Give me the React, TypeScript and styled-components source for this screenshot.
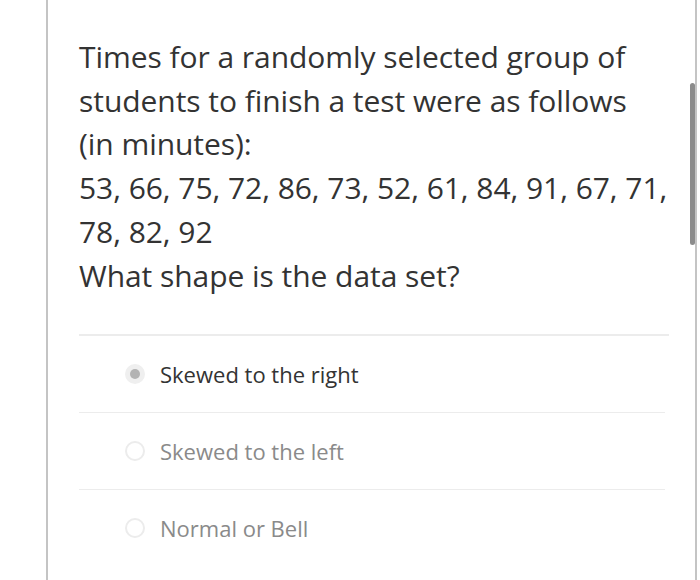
import React from 'react';
import styled, { createGlobalStyle } from 'styled-components';

const GlobalStyle = createGlobalStyle`
  html, body {
    margin: 0;
    padding: 0;
    background: #fff;
  }
  body {
    font-family: 'Open Sans', 'Noto Sans', sans-serif;
  }
`;

const options = [
  { label: 'Skewed to the right', selected: true },
  { label: 'Skewed to the left', selected: false },
  { label: 'Normal or Bell', selected: false }
];

export default () => {
  return (
    <>
      <GlobalStyle />
      <Page>
        <Card>
          <Question>
            Times for a randomly selected group of students to finish a test were as follows{' '}
            {'(in\u00a0minutes):'}
            <br />
            53, 66, 75, 72, 86, 73, 52, 61, 84, 91, 67, 71, 78, 82, 92
            <br />
            What shape is the data set?
          </Question>
          <Options>
            {options.map(o => (
              <Option key={o.label}>
                <Radio selected={o.selected} />
                <OptionLabel selected={o.selected}>{o.label}</OptionLabel>
              </Option>
            ))}
          </Options>
        </Card>
        <Scrollbar />
      </Page>
    </>
  );
};

const Page = styled.div`
  position: relative;
  width: 700px;
  height: 580px;
  overflow: hidden;
  background: #fff;
`;

const Card = styled.div`
  margin-left: 46px;
  width: 651px;
  height: 580px;
  box-sizing: border-box;
  border-left: 2px solid #c4c4c4;
  border-right: 2px solid #c4c4c4;
  padding: 35px 30px 0 31px;
`;

const Question = styled.p`
  margin: 0;
  width: 590px;
  font-size: 30px;
  line-height: 43.7px;
  color: #333;
  letter-spacing: -0.05px;
  padding-bottom: 37px;
  border-bottom: 2px solid #ececec;
`;

const Options = styled.div`
  display: flex;
  flex-direction: column;
`;

const Option = styled.div`
  display: flex;
  align-items: center;
  height: 76px;
  padding-left: 46px;
  gap: 15px;
  border-bottom: 1px solid #ececec;
  &:last-child {
    border-bottom: none;
  }
`;

const Radio = styled.span<{ selected: boolean }>`
  width: 20px;
  height: 20px;
  border-radius: 50%;
  box-sizing: border-box;
  position: relative;
  background: ${p => (p.selected ? '#efefef' : '#fff')};
  border: ${p => (p.selected ? 'none' : '2px solid #ececec')};
  &::after {
    content: '';
    display: ${p => (p.selected ? 'block' : 'none')};
    position: absolute;
    left: 5px;
    top: 5px;
    width: 10px;
    height: 10px;
    border-radius: 50%;
    background: #b3b3b3;
  }
`;

const OptionLabel = styled.span<{ selected: boolean }>`
  font-size: 22px;
  color: ${p => (p.selected ? '#333' : '#8a8a8a')};
`;

const Scrollbar = styled.div`
  position: absolute;
  left: 690px;
  top: 83px;
  width: 5px;
  height: 162px;
  border-radius: 3px;
  background: #8c8c8c;
`;
